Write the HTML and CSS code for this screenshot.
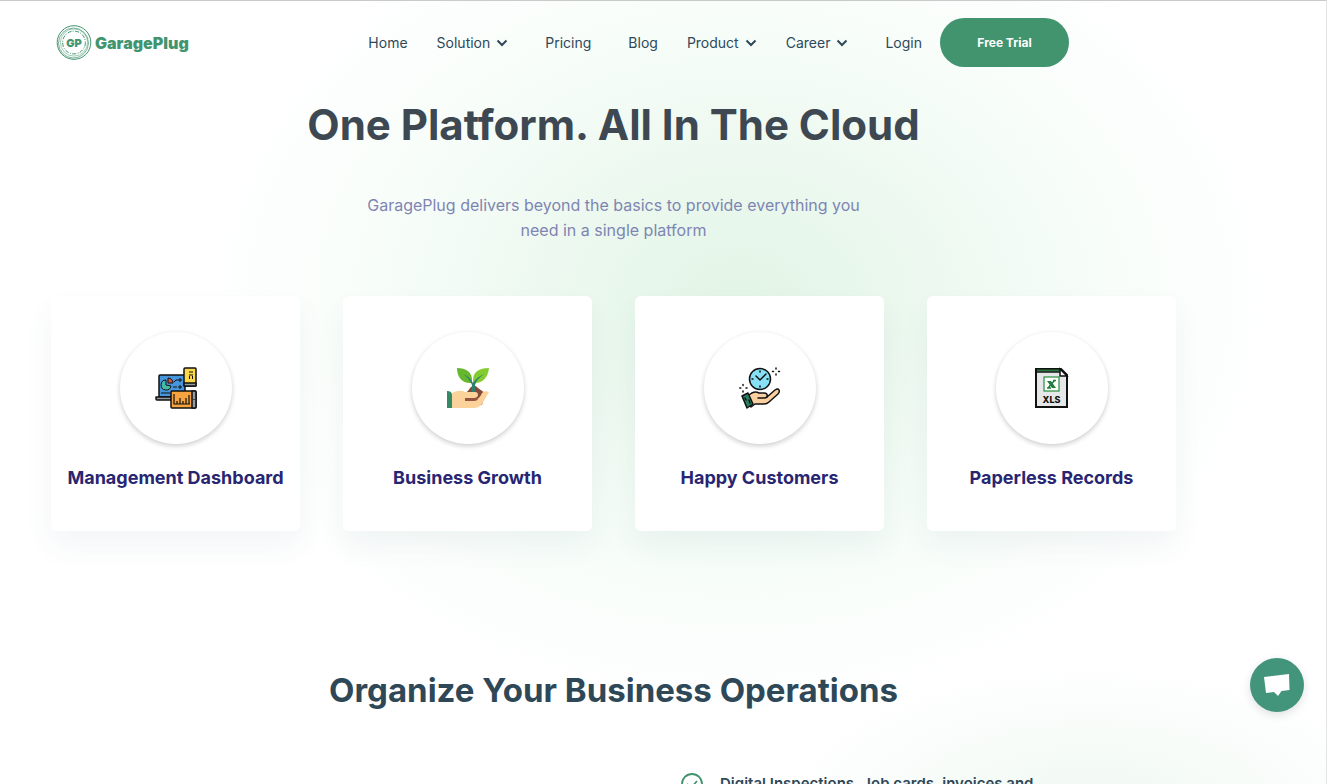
FILE: index.html
```
<!DOCTYPE html>
<html lang="en">
<head>
    <meta charset="UTF-8">
    <meta name="viewport" content="width=device-width, initial-scale=1.0">
    <title>GaragePlug</title>
    <link rel="stylesheet" href="styles.css">
</head>

<body>
    <div class="page">
        <header class="navbar">
            <a href="#" class="logo">
                <svg width="36" height="36" viewBox="0 0 36 36" fill="none" stroke="#42946f">
                    <circle cx="18" cy="17.5" r="16.8" stroke-width="1"/>
                    <circle cx="17.5" cy="18" r="15" stroke-width="0.7"/>
                    <circle cx="18" cy="17.5" r="13.6" stroke-width="0.5"/>
                    <circle cx="18" cy="17.5" r="11.4" stroke-width="1" stroke-dasharray="4 1.2 1 1.6"/>
                    <text x="18" y="21.5" text-anchor="middle" class="logo-mark">GP</text>
                </svg>
                <span>GaragePlug</span>
            </a>
            <nav class="menu">
                <a href="#">Home</a>
                <button type="button">Solution <svg width="12" height="8" viewBox="0 0 12 8"><path d="M1.5 1.5 6 6l4.5-4.5"/></svg></button>
                <a href="#" class="single">Pricing</a>
                <a href="#" class="single">Blog</a>
                <button type="button">Product <svg width="12" height="8" viewBox="0 0 12 8"><path d="M1.5 1.5 6 6l4.5-4.5"/></svg></button>
                <button type="button">Career <svg width="12" height="8" viewBox="0 0 12 8"><path d="M1.5 1.5 6 6l4.5-4.5"/></svg></button>
                <a href="#" class="single">Login</a>
            </nav>
            <button type="button" class="trial">Free Trial</button>
        </header>

        <main>
            <section class="platform">
                <h1>One Platform. All In The Cloud</h1>
                <p class="lead">GaragePlug delivers beyond the basics to provide everything you need in a single platform</p>

                <div class="cards">
                    <article class="card">
                        <div class="icon">
                            <svg width="42" height="42" viewBox="0 0 42 42" stroke="#111" stroke-width="1.5" stroke-linejoin="round">
                                <path d="M4 30V9q0-1 1-1h24q1 0 1 1v21z" fill="#4596dc"/>
                                <path d="M1 30h17v3H2q-1 0-1-1z" fill="#929ba3"/>
                                <path d="M11 13a5 5 0 1 0 5 6l-5-1z" fill="#43bca3" stroke-width="1"/>
                                <path d="M13 11v5h5a5 5 0 0 0-5-5z" fill="#d95345" stroke-width="1"/>
                                <path d="M19 15l2-2h2M18 20h4M6 26h9M24 19h2v2h-2zM24 12h2v2h-2z" fill="none" stroke-width="1"/>
                                <rect x="29" y="1" width="12" height="18" rx="1" fill="#fbd84a"/>
                                <path d="M29 16h12v3H29z" fill="#929ba3"/>
                                <path d="M34 5h4M34 8h4M34.5 9v3M37.5 9v3" fill="none" stroke-width="1"/>
                                <rect x="16" y="24" width="25" height="17" rx="1" fill="#f6a340"/>
                                <path d="M37 24h3q1 0 1 1v15q0 1-1 1h-3z" fill="#929ba3"/>
                                <path d="M19 27v10h16M22 37v-3M25 37v-6M28 37v-3M31 37v-6M34 37v-9M39 32v1" fill="none" stroke-width="1.2"/>
                            </svg>
                        </div>
                        <h2>Management Dashboard</h2>
                    </article>
                    <article class="card">
                        <div class="icon">
                            <svg width="42" height="42" viewBox="0 0 42 42">
                                <path d="M15 28q6-3 8-7 4-5 8 0l7 5-3 12-17-3z" fill="#864b38"/>
                                <path d="M10 1c9 0 15 4 15 12v3C16 17 10 11 10 1z" fill="#66b62e"/>
                                <path d="M42 1c-10 0-16 4-16 12v3c9 1 15-5 16-15z" fill="#83cc2f"/>
                                <path d="M16 7q7 3 10 9Q30 10 37 7q-8 6-9 11v6l3 3h-8l2-3v-6Q22 11 16 7z" fill="#2d806b"/>
                                <path d="M5 26q8-4 13-1h10q3 0 3 3t-3 3H18v2h11q4-2 6-7 3-3 7-1l-7 12q-3 4-8 4H5z" fill="#fbd29a"/>
                                <path d="M18 31h9q4 0 4-3v3q0 3-4 3h-9z" fill="#965540"/>
                                <path d="M0 24q5 0 5 4v13H0z" fill="#338a65"/>
                            </svg>
                        </div>
                        <h2>Business Growth</h2>
                    </article>
                    <article class="card">
                        <div class="icon">
                            <svg width="42" height="42" viewBox="0 0 42 42" stroke="#111" stroke-width="1.5" stroke-linecap="round" stroke-linejoin="round">
                                <circle cx="21" cy="12" r="10.5" fill="#87e1f6"/>
                                <path d="M17 9l4 4 6-6M21 4v1M21 19v1M13 12h1M28 12h1" fill="none"/>
                                <path d="M37 1v1M37 7v1M33.500 4.500h1M39.500 4.500h1M4 17.500v1M4 24v1M0.800 21h1M7 21h1" fill="none"/>
                                <path d="M9 29q6-6 11-3h5q4 0 3 4l8-7q3-2 4 0t-1 4l-9 8q-2 2-5 2H16l-4 3z" fill="#fbd0a0"/>
                                <path d="M28 30q-1 1-3 1h-6" fill="none"/>
                                <path d="M3 29l6-3 5 11-6 4z" fill="#278061"/>
                                <path d="M6 31l1 2M10 33l1 3" fill="none"/>
                            </svg>
                        </div>
                        <h2>Happy Customers</h2>
                    </article>
                    <article class="card">
                        <div class="icon">
                            <svg width="42" height="42" viewBox="0 0 42 42">
                                <path d="M5 2h25l6 6v32H5z" fill="#e6e7e8" stroke="#111" stroke-width="2"/>
                                <path d="M6 2.500h23v2H6z" fill="#21783a"/>
                                <path d="M5 5h25" stroke="#111" stroke-width="1.5"/>
                                <path d="M29 2v7h7z" fill="#fff" stroke="#111" stroke-width="1.5"/>
                                <rect x="13" y="10" width="15" height="14" fill="#fff" stroke="#35964a" stroke-width="1.3"/>
                                <path d="M16 14h4l5 7h-4z" fill="#237d3c"/>
                                <path d="M24 13l-7 8M22 13.500h3M16 21h4" stroke="#237d3c" stroke-width="1.5"/>
                                <text x="20.5" y="36" text-anchor="middle" class="xls">XLS</text>
                            </svg>
                        </div>
                        <h2>Paperless Records</h2>
                    </article>
                </div>
            </section>

            <section class="operations">
                <h2>Organize Your Business Operations</h2>
                <ul class="features">
                    <li>
                        <svg width="22" height="22" viewBox="0 0 22 22" fill="none" stroke="#42946f" stroke-width="1.8">
                            <circle cx="11" cy="11" r="10"/>
                            <path d="M6 11l4 4 6-7"/>
                        </svg>
                        <span>Digital Inspections, Job cards, invoices and</span>
                    </li>
                </ul>
            </section>
        </main>
    </div>

    <button type="button" class="chat" aria-label="Open chat">
        <svg width="26" height="22" viewBox="0 0 26 22"><path d="M0 3 25 0l.5 16-8 1-3.500 5-4-4-8 1z" fill="#fff"/></svg>
    </button>
</body>
</html>
```
FILE: styles.css
```
* {
    box-sizing: border-box;
}

body {
    font-family: Inter, 'Liberation Sans', sans-serif;
    margin: 0;
    background-color: #fff;
    color: #2f4858;
}

h1, h2, p, ul {
    margin: 0;
    padding: 0;
}

a {
    color: inherit;
    text-decoration: none;
}

button {
    font-family: inherit;
    color: inherit;
    border: none;
    background: none;
    padding: 0;
    cursor: pointer;
}

.page {
    margin-right: 2px;
    border-top: 1px solid #c9cbca;
    border-right: 1px solid #e3e5e4;
    padding-left: 51px;
    padding-right: 150px;
    background:
        radial-gradient(ellipse 550px 420px at 740px 300px, #e2f5e7 0%, #ebf8ee 30%, #f7fdf9 65%, rgba(255, 255, 255, 0) 100%),
        radial-gradient(ellipse 320px 150px at 1090px 810px, #eff8f2 0%, rgba(255, 255, 255, 0) 100%),
        #fff;
}

/* navbar */
.navbar {
    display: flex;
    align-items: center;
    justify-content: space-between;
    padding: 17px 107px 0 5px;
}

.logo {
    display: flex;
    align-items: center;
    gap: 3px;
    color: #42946f;
    font-size: 16px;
    font-weight: 900;
}

.logo-mark {
    font-size: 11px;
    font-weight: 900;
    fill: #42946f;
    stroke: none;
}

.menu {
    display: flex;
    align-items: center;
    gap: 29px;
    margin-left: auto;
    margin-right: 18px;
    font-size: 14px;
}

.menu button {
    display: flex;
    align-items: center;
    gap: 6px;
    font-size: 14px;
}

.menu svg {
    fill: none;
    stroke: #2f4858;
    stroke-width: 2;
}

.menu .single {
    margin-left: 8px;
}

.trial {
    width: 129px;
    height: 49px;
    border-radius: 25px;
    background: #42946f;
    color: #fff;
    font-size: 12px;
    font-weight: 700;
}

/* platform */
.platform {
    text-align: center;
}

h1 {
    margin-top: 30px;
    font-size: 42px;
    line-height: 56px;
    font-weight: 700;
    color: #3d4852;
}

.lead {
    max-width: 500px;
    margin: 40px auto 0;
    font-size: 16px;
    line-height: 25px;
    color: #7f85b2;
}

.cards {
    display: grid;
    grid-template-columns: repeat(4, 1fr);
    gap: 43px;
    margin-top: 53px;
}

.card {
    display: flex;
    flex-direction: column;
    align-items: center;
    padding: 36px 0 40px;
    background: #fff;
    border-radius: 6px;
    box-shadow: 0 15px 30px rgba(50, 80, 120, 0.06);
}

.icon {
    display: flex;
    align-items: center;
    justify-content: center;
    width: 112px;
    height: 112px;
    border-radius: 50%;
    box-shadow: 0 2px 5px rgba(0, 0, 0, 0.2);
}

.xls {
    font-size: 9px;
    font-weight: 800;
    fill: #111;
}

.card h2 {
    margin-top: 21px;
    font-size: 18px;
    line-height: 26px;
    font-weight: 700;
    color: #282572;
}

/* operations */
.operations h2 {
    margin-top: 135px;
    font-size: 33px;
    line-height: 48px;
    font-weight: 700;
    text-align: center;
}

.features {
    margin: 55px 0 0 56%;
    list-style: none;
}

.features li {
    display: flex;
    align-items: center;
    gap: 17px;
    padding-bottom: 30px;
    font-size: 15px;
    line-height: 30px;
    font-weight: 600;
    white-space: nowrap;
}

.chat {
    position: fixed;
    right: 25px;
    bottom: 72px;
    display: flex;
    align-items: center;
    justify-content: center;
    width: 54px;
    height: 54px;
    border-radius: 50%;
    background: #42947a;
    box-shadow: 0 3px 10px rgba(0, 0, 0, 0.12);
}
```
